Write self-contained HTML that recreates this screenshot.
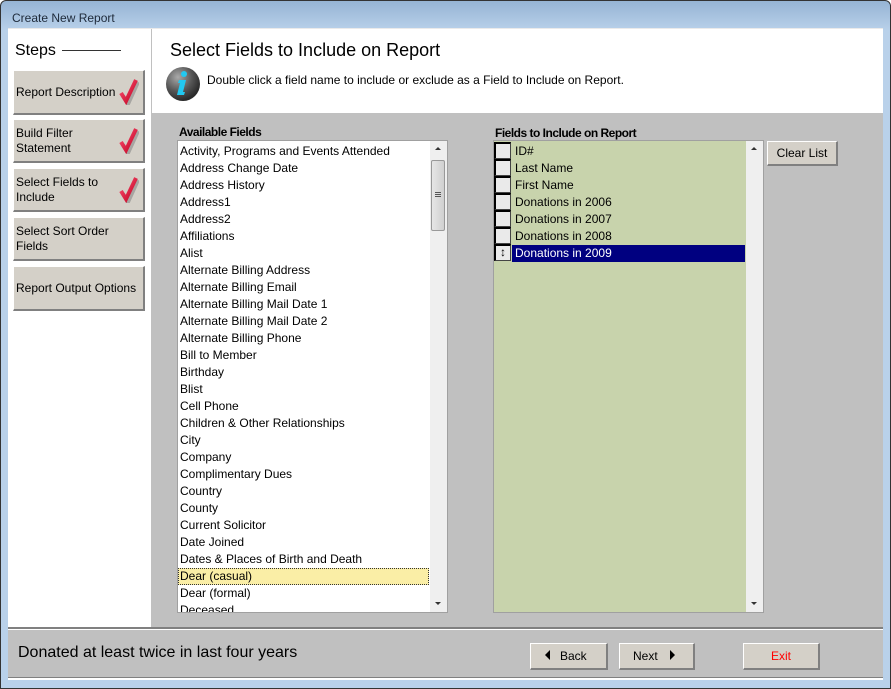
<!DOCTYPE html>
<html><head><meta charset="utf-8"><style>
*{margin:0;padding:0;box-sizing:border-box}
body{width:891px;height:689px;overflow:hidden;font-family:"Liberation Sans",sans-serif;font-size:12px;color:#000;background:#fff;position:relative}
.a{position:absolute}
.frame{left:0;top:0;width:891px;height:689px;background:linear-gradient(#96b4d4 0,#b9d1ea 30px,#b9d1ea 100%);border:1px solid #333;border-radius:6px 6px 0 0}
.btn{position:absolute;background:#d4d0c8;border-top:1px solid #fff;border-left:1px solid #fff;border-right:2px solid #808080;border-bottom:2px solid #808080}
.step{left:13px;width:132px;padding-left:2px;font-size:12px;line-height:15px;display:flex;align-items:center}
.chk{position:absolute;right:4px;top:50%;margin-top:-13px}
.item{position:absolute;left:0;height:17px;line-height:17px;padding-left:2px;white-space:nowrap;font-size:12px}
.cb{position:absolute;left:0;width:17px;height:17px;background:#eaeaea;border:1px solid #444;border-left:2px solid #000;border-top:2px solid #000}
</style></head><body>
<div class="a frame"></div>
<div class="a" style="left:12px;top:11px;font-size:12px;color:#1e2a3a">Create New Report</div>
<div class="a" style="left:8px;top:28px;width:875px;height:652px;background:#c0c0c0"></div>
<div class="a" style="left:8px;top:28px;width:143px;height:600px;background:#fff"></div>
<div class="a" style="left:152px;top:28px;width:731px;height:85px;background:#fff"></div>
<div class="a" style="left:8px;top:28px;width:875px;height:1px;background:#eaeaea"></div>
<div class="a" style="left:15px;top:42px;font-size:16px">Steps</div>
<div class="a" style="left:62px;top:50px;width:59px;height:1px;background:#333"></div>
<svg width="0" height="0" style="position:absolute"><defs><linearGradient id="g" x1="0" y1="0" x2="1" y2="1"><stop offset="0" stop-color="#ff5577"/><stop offset="1" stop-color="#c00020"/></linearGradient></defs></svg>
<div class="btn step" style="top:70px;height:45px">Report Description<svg class="chk" width="20" height="26" viewBox="0 0 20 26"><path d="M3 16 L8 24 L18 2" stroke="#888" stroke-width="4" fill="none" opacity=".6" transform="translate(1,1)"/><path d="M2 14 L7 22 L17 1" stroke="url(#g)" stroke-width="4" fill="none"/></svg></div>
<div class="btn step" style="top:119px;height:44px">Build Filter<br>Statement<svg class="chk" width="20" height="26" viewBox="0 0 20 26"><path d="M3 16 L8 24 L18 2" stroke="#888" stroke-width="4" fill="none" opacity=".6" transform="translate(1,1)"/><path d="M2 14 L7 22 L17 1" stroke="url(#g)" stroke-width="4" fill="none"/></svg></div>
<div class="btn step" style="top:168px;height:44px">Select Fields to<br>Include<svg class="chk" width="20" height="26" viewBox="0 0 20 26"><path d="M3 16 L8 24 L18 2" stroke="#888" stroke-width="4" fill="none" opacity=".6" transform="translate(1,1)"/><path d="M2 14 L7 22 L17 1" stroke="url(#g)" stroke-width="4" fill="none"/></svg></div>
<div class="btn step" style="top:217px;height:44px">Select Sort Order<br>Fields</div>
<div class="btn step" style="top:266px;height:45px">Report Output Options</div>
<div class="a" style="left:170px;top:40px;font-size:18px">Select Fields to Include on Report</div>
<svg class="a" style="left:165px;top:66px" width="36" height="36" viewBox="0 0 36 36"><defs><radialGradient id="r" cx=".35" cy=".3" r=".7"><stop offset="0" stop-color="#aaa"/><stop offset=".6" stop-color="#555"/><stop offset="1" stop-color="#2a2a2a"/></radialGradient></defs><circle cx="18" cy="18" r="17" fill="url(#r)"/><circle cx="19" cy="8" r="3" fill="#22c8f0"/><path d="M14 14 h7 l-3 12 h2 l-1 3 h-7 l3 -12 h-2z" fill="#22c8f0"/></svg>
<div class="a" style="left:207px;top:73px;font-size:12px">Double click a field name to include or exclude as a Field to Include on Report.</div>
<div class="a" style="left:179px;top:125px;font-weight:bold;font-size:12px;letter-spacing:-.5px">Available Fields</div>
<div class="a" style="left:177px;top:140px;width:271px;height:473px;background:#fff;border:1px solid #a0a0a0;overflow:hidden">
<div class="a" style="left:0;top:2px;width:252px;height:470px">
<div class="item" style="top:0">Activity, Programs and Events Attended</div>
<div class="item" style="top:17px">Address Change Date</div>
<div class="item" style="top:34px">Address History</div>
<div class="item" style="top:51px">Address1</div>
<div class="item" style="top:68px">Address2</div>
<div class="item" style="top:85px">Affiliations</div>
<div class="item" style="top:102px">Alist</div>
<div class="item" style="top:119px">Alternate Billing Address</div>
<div class="item" style="top:136px">Alternate Billing Email</div>
<div class="item" style="top:153px">Alternate Billing Mail Date 1</div>
<div class="item" style="top:170px">Alternate Billing Mail Date 2</div>
<div class="item" style="top:187px">Alternate Billing Phone</div>
<div class="item" style="top:204px">Bill to Member</div>
<div class="item" style="top:221px">Birthday</div>
<div class="item" style="top:238px">Blist</div>
<div class="item" style="top:255px">Cell Phone</div>
<div class="item" style="top:272px">Children &amp; Other Relationships</div>
<div class="item" style="top:289px">City</div>
<div class="item" style="top:306px">Company</div>
<div class="item" style="top:323px">Complimentary Dues</div>
<div class="item" style="top:340px">Country</div>
<div class="item" style="top:357px">County</div>
<div class="item" style="top:374px">Current Solicitor</div>
<div class="item" style="top:391px">Date Joined</div>
<div class="item" style="top:408px">Dates &amp; Places of Birth and Death</div>
<div class="item" style="top:425px;width:251px;background:#faeea6;border:1px dotted #333;line-height:15px;padding-left:1px">Dear (casual)</div>
<div class="item" style="top:442px">Dear (formal)</div>
<div class="item" style="top:459px">Deceased</div>
</div>
<div class="a" style="left:252px;top:0;width:17px;height:471px;background:#efefef"></div>
<div class="a" style="left:257px;top:6px;width:0;height:0;border-left:3px solid transparent;border-right:3px solid transparent;border-bottom:3px solid #333"></div>
<div class="a" style="left:257px;top:461px;width:0;height:0;border-left:3px solid transparent;border-right:3px solid transparent;border-top:3px solid #333"></div>
<div class="a" style="left:253px;top:19px;width:14px;height:71px;background:linear-gradient(90deg,#e6e6e6,#d0d0d0);border:1px solid #999;border-radius:2px"></div>
<div class="a" style="left:257px;top:51px;width:6px;height:5px;border-top:1px solid #555;border-bottom:1px solid #555"></div>
<div class="a" style="left:257px;top:53px;width:6px;height:1px;background:#555"></div>
</div>
<div class="a" style="left:495px;top:126px;font-weight:bold;font-size:12px;letter-spacing:-.5px">Fields to Include on Report</div>
<div class="a" style="left:493px;top:140px;width:271px;height:473px;background:#fff;border:1px solid #a0a0a0;overflow:hidden">
<div class="a" style="left:0;top:0;width:252px;height:471px;background:#c8d3ac"></div>
<div class="a" style="left:0;top:1px;width:252px">
<div class="cb" style="top:0"></div><div class="item" style="top:1px;left:19px">ID#</div>
<div class="cb" style="top:17px"></div><div class="item" style="top:18px;left:19px">Last Name</div>
<div class="cb" style="top:34px"></div><div class="item" style="top:35px;left:19px">First Name</div>
<div class="cb" style="top:51px"></div><div class="item" style="top:52px;left:19px">Donations in 2006</div>
<div class="cb" style="top:68px"></div><div class="item" style="top:69px;left:19px">Donations in 2007</div>
<div class="cb" style="top:85px"></div><div class="item" style="top:86px;left:19px">Donations in 2008</div>
<div class="cb" style="top:102px;text-align:center;line-height:13px;font-size:12px;font-weight:bold">&#x2195;</div><div class="item" style="top:103px;left:18px;width:233px;padding-left:3px;background:#000080;color:#fff">Donations in 2009</div>
</div>
<div class="a" style="left:252px;top:0;width:17px;height:471px;background:#efefef"></div>
<div class="a" style="left:257px;top:6px;width:0;height:0;border-left:3px solid transparent;border-right:3px solid transparent;border-bottom:3px solid #333"></div>
<div class="a" style="left:257px;top:461px;width:0;height:0;border-left:3px solid transparent;border-right:3px solid transparent;border-top:3px solid #333"></div>
</div>
<div class="btn" style="left:767px;top:141px;width:71px;height:25px;text-align:center;line-height:23px">Clear List</div>
<div class="a" style="left:8px;top:627px;width:875px;height:2px;background:#808080"></div>
<div class="a" style="left:8px;top:629px;width:875px;height:1px;background:#fff"></div>
<div class="a" style="left:8px;top:677px;width:875px;height:1px;background:#808080"></div>
<div class="a" style="left:8px;top:678px;width:875px;height:2px;background:#fff"></div>
<div class="a" style="left:18px;top:644px;font-size:16px">Donated at least twice in last four years</div>
<div class="btn" style="left:530px;top:643px;width:78px;height:27px;line-height:25px;padding-left:14px"><span style="display:inline-block;border-top:5px solid transparent;border-bottom:5px solid transparent;border-right:5px solid #000;margin-right:10px"></span>Back</div>
<div class="btn" style="left:619px;top:643px;width:76px;height:27px;line-height:25px;padding-left:13px">Next<span style="display:inline-block;border-top:5px solid transparent;border-bottom:5px solid transparent;border-left:5px solid #000;margin-left:12px"></span></div>
<div class="btn" style="left:743px;top:643px;width:77px;height:27px;line-height:25px;text-align:center;color:#f00">Exit</div>
</body></html>
